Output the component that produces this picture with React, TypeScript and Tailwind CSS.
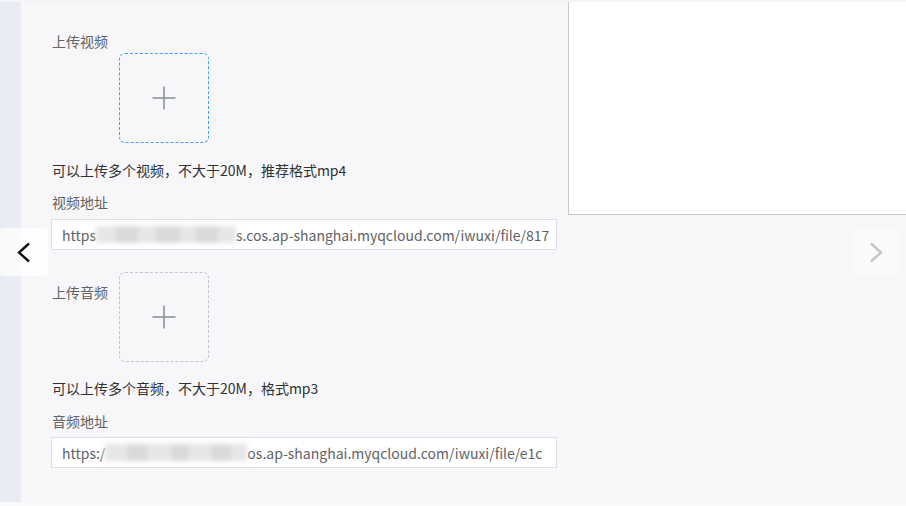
import React from "react";

const cjk = { fontFamily: '"Microsoft YaHei", "Noto Sans CJK SC", "Noto Sans", sans-serif' };

function Plus() {
  return (
    <svg width="24" height="24" viewBox="0 0 24 24" fill="none">
      <line x1="12" y1="0.5" x2="12" y2="23.5" stroke="#8c939d" strokeWidth="1.6" />
      <line x1="0.5" y1="12" x2="23.5" y2="12" stroke="#8c939d" strokeWidth="1.6" />
    </svg>
  );
}

function UploadBox({ active }: { active?: boolean }) {
  return (
    <div
      className={
        "flex h-[90px] w-[90px] shrink-0 items-center justify-center rounded-[6px] border border-dashed " +
        (active ? "border-[#409eff]" : "border-[#c0c4cc]")
      }
    >
      <Plus />
    </div>
  );
}

function Masked({ widths }: { widths: number[] }) {
  return (
    <span className="flex h-[20px] items-center blur-[2.5px]">
      {widths.map((w, i) => (
        <span
          key={i}
          className={"inline-block h-[17px] " + (i % 2 === 0 ? "bg-[#e6e6e8]" : "bg-[#dadadc]")}
          style={{ width: w }}
        />
      ))}
    </span>
  );
}

function UrlInput({ head, masks, tail }: { head: string; masks: number[]; tail: string }) {
  return (
    <div className="flex h-[31px] w-[506px] items-center overflow-hidden whitespace-nowrap border border-[#dcdfe6] bg-white pl-[10px] text-[14px] text-[#606266]">
      <span>{head}</span>
      <Masked widths={masks} />
      <span>{tail}</span>
    </div>
  );
}

function Chevron({ dir, color }: { dir: "left" | "right"; color: string }) {
  const pts = dir === "left" ? "12,1.5 2,10.5 12,19.5" : "2,1.5 12,10.5 2,19.5";
  return (
    <svg width="14" height="21" viewBox="0 0 14 21" fill="none">
      <polyline points={pts} stroke={color} strokeWidth="2.4" strokeLinejoin="miter" />
    </svg>
  );
}

export default function App() {
  return (
    <div className="flex h-[506px] w-[906px] flex-col overflow-hidden bg-[#f9f9fb]" style={cjk}>
      <div className="h-[2px] bg-[#f3f4f6]" />
      <div className="relative flex h-[500px]">
        <div className="w-[21px] shrink-0 bg-[#e9edf3]" />
        <div className="flex flex-1 bg-[#f7f7f9]">
          {/* form column */}
          <div className="flex w-[547px] flex-col pl-[31px] text-[14px] leading-[20px]">
            <div className="mt-[29px] text-[#606266]">上传视频</div>
            <div className="ml-[67px] mt-[2px]">
              <UploadBox active />
            </div>
            <div className="mt-[17px] text-[#303133]">可以上传多个视频，不大于20M，推荐格式mp4</div>
            <div className="mt-[12px] text-[#606266]">视频地址</div>
            <div className="ml-[-1px] mt-[7px]">
              <UrlInput
                head="https"
                masks={[20, 22, 18, 24, 16, 22, 18]}
                tail="s.cos.ap-shanghai.myqcloud.com/iwuxi/file/817"
              />
            </div>
            <div className="mt-[22px] flex">
              <div className="w-[67px] pt-[10px] text-[#606266]">上传音频</div>
              <UploadBox />
            </div>
            <div className="mt-[16px] text-[#303133]">可以上传多个音频，不大于20M，格式mp3</div>
            <div className="mt-[13px] text-[#606266]">音频地址</div>
            <div className="ml-[-1px] mt-[6px]">
              <UrlInput
                head="https:/"
                masks={[22, 20, 24, 18, 22, 20, 16]}
                tail="os.ap-shanghai.myqcloud.com/iwuxi/file/e1c"
              />
            </div>
          </div>
          {/* preview panel */}
          <div className="h-[213px] flex-1 border-b border-l border-[#c8c8c8] bg-white" />
        </div>

        {/* carousel arrows */}
        <div className="absolute left-0 top-[226px] flex h-[48px] w-[48px] items-center justify-center rounded-[4px] bg-white/70">
          <Chevron dir="left" color="#111111" />
        </div>
        <div className="absolute left-[852px] top-[226px] flex h-[48px] w-[48px] items-center justify-center rounded-[4px] bg-white/40">
          <Chevron dir="right" color="#c0c4cc" />
        </div>
      </div>
      <div className="flex-1 bg-[#f9f9fb]" />
    </div>
  );
}
